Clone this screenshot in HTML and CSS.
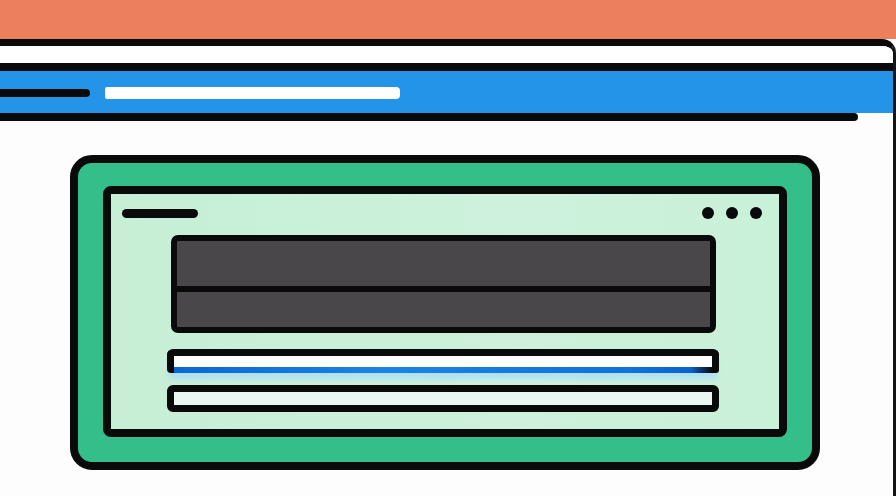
FILE: index.html
```html
<!DOCTYPE html>
<html>
<head>
<meta charset="utf-8">
<link rel="stylesheet" href="styles.css">
</head>
<body>
<div class="topbar"></div>
<div class="window">
  <div class="titlebar"></div>
  <div class="toolbar">
    <div class="pill"></div>
    <div class="address"></div>
  </div>
  <div class="toolbar-line"></div>
  <div class="content">
    <div class="card">
      <div class="panel">
        <div class="panel-head">
          <div class="dash"></div>
          <div class="dots"><span class="dot"></span><span class="dot"></span><span class="dot"></span></div>
        </div>
        <div class="screen">
          <div class="screen-top"></div>
          <div class="screen-bottom"></div>
        </div>
        <div class="input input-focus"></div>
        <div class="input input-plain"></div>
      </div>
    </div>
  </div>
</div>
</body>
</html>
```
FILE: styles.css
```css
html, body {
  margin: 0;
  padding: 0;
}
body {
  width: 896px;
  height: 496px;
  overflow: hidden;
  background: #fdfdfd;
  font-family: "Liberation Sans", Arial, sans-serif;
}
.topbar {
  height: 39px;
  background: #eb7f5e;
}
.window {
  height: 450px;
  border-top: 7px solid #0a0a0a;
  border-right: 3px solid #151515;
  border-top-right-radius: 14px;
  background: #fdfdfd;
  overflow: hidden;
}
.titlebar {
  height: 17px;
  background: #ffffff;
}
.toolbar {
  height: 42px;
  border-top: 8px solid #0a0a0a;
  background: #2494e8;
  display: flex;
  align-items: center;
  gap: 15px;
}
.pill {
  width: 90px;
  height: 8px;
  background: #0a0a0a;
  border-radius: 0 4px 4px 0;
  margin-top: 2px;
}
.address {
  width: 295px;
  height: 12px;
  background: #ffffff;
  border-radius: 2px 4px 4px 2px;
  margin-top: 2px;
}
.toolbar-line {
  width: 858px;
  height: 8px;
  background: #0a0a0a;
  border-radius: 0 4px 4px 0;
}
.content {
  padding: 34px 0 0 70px;
}
.card {
  box-sizing: border-box;
  width: 750px;
  height: 315px;
  border: 8px solid #0a0a0a;
  border-radius: 22px;
  background: #34be89;
  padding: 23px 25px 25px 25px;
}
.panel {
  height: 251px;
  box-sizing: border-box;
  border: 8px solid #0a0a0a;
  border-radius: 8px;
  background: linear-gradient(90deg, #c6efd6 0%, #cdf1dc 60%, #c9f0d9 100%);
  padding: 13px 17px 0 11px;
  display: flex;
  flex-direction: column;
  align-items: flex-start;
}
.panel-head {
  width: 100%;
  height: 12px;
  display: flex;
  align-items: center;
  justify-content: space-between;
}
.dash {
  width: 76px;
  height: 9px;
  border-radius: 5px;
  background: #0a0a0a;
}
.dots {
  display: flex;
  gap: 12px;
}
.dot {
  width: 12px;
  height: 12px;
  border-radius: 50%;
  background: #0a0a0a;
}
.screen {
  margin: 16px 0 0 49px;
  width: 545px;
  box-sizing: border-box;
  border: 6px solid #0a0a0a;
  border-radius: 7px;
  background: #4a474a;
}
.screen-top {
  height: 45px;
  border-bottom: 6px solid #0a0a0a;
}
.screen-bottom {
  height: 35px;
}
.input {
  margin-left: 45px;
  width: 552px;
  box-sizing: border-box;
  border: 7px solid #0a0a0a;
  border-radius: 6px;
}
.input-focus {
  margin-top: 16px;
  height: 24px;
  border-bottom: 0;
  border-radius: 6px 6px 3px 4px;
  background:
    linear-gradient(90deg, rgba(10,10,10,0) 0, rgba(10,10,10,0) 96%, #0a0a0a 100%) bottom / 100% 6px no-repeat,
    linear-gradient(90deg, #0b68d2 0%, #1a84e4 40%, #0e72da 85%, #0a5ec8 100%) bottom / 100% 6px no-repeat,
    #ffffff;
  box-shadow: 0 8px 5px -2px rgba(170, 222, 246, 0.85);
}
.input-plain {
  margin-top: 12px;
  height: 27px;
  background: #eaf6f1;
}
```
